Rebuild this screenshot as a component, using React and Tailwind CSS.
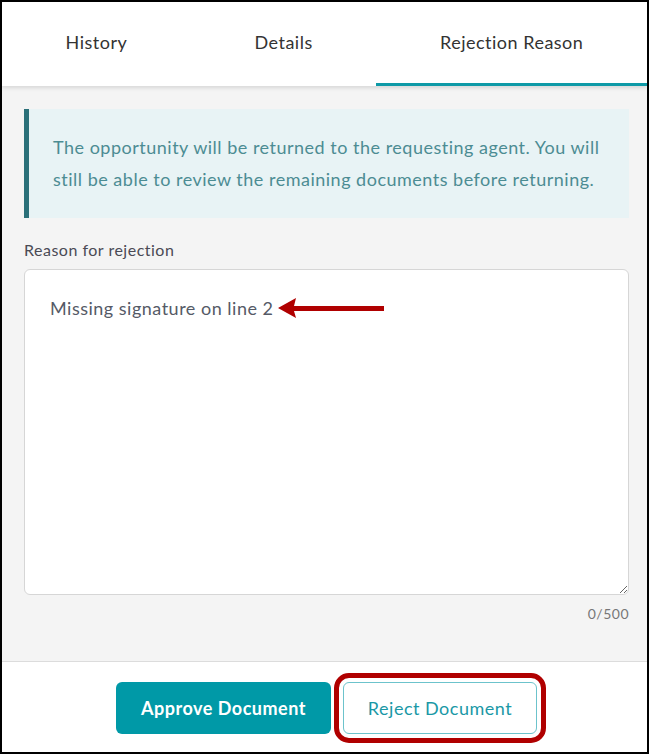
import React from 'react'

const tabs = ['History', 'Details', 'Rejection Reason']

const RejectionPanel = () => {
    const active = 2

    return (
        <div
            className="w-[649px] h-[754px] border-2 border-black bg-white flex flex-col tracking-[0.5px]"
            style={{ fontFamily: 'Lato, "Noto Sans", sans-serif' }}
        >
            <div className="relative z-10 flex h-[84px] bg-white shadow-[0_2px_4px_rgba(0,0,0,0.12)]">
                {tabs.map((tab, i) => (
                    <button
                        key={tab}
                        className={
                            i === active
                                ? 'flex-auto flex items-center justify-center text-[18px] text-[#333] border-b-[3px] border-[#0e9aa7]'
                                : 'flex-auto flex items-center justify-center text-[18px] text-[#333] border-b-[3px] border-transparent'
                        }
                    >
                        {tab}
                    </button>
                ))}
            </div>

            <div className="flex-1 bg-[#f4f4f4] pl-[22px] pr-[18px] pt-[23px] border-b border-[#dcdcdc]">
                <div className="bg-[#e8f3f5] border-l-[5px] border-[#2a7079] pl-[24px] pr-4 pt-[22px] pb-[23px] text-[18px] leading-[32px] text-[#4c8c93]">
                    The opportunity will be returned to the requesting agent. You will still be able to review the remaining documents before returning.
                </div>

                <label className="block mt-[20px] mb-[7px] text-[16px] leading-[24px] text-[#4a4a55]" htmlFor="reason">
                    Reason for rejection
                </label>
                <div className="relative">
                    <textarea
                        id="reason"
                        readOnly
                        value="Missing signature on line 2"
                        className="block w-full h-[326px] bg-white border border-[#d6d6d6] rounded-md px-[25px] pt-[25px] text-[18px] leading-[26px] text-[#555a66] outline-none tracking-[0.5px]"
                        style={{ fontFamily: 'Lato, "Noto Sans", sans-serif' }}
                    />
                    <svg className="absolute left-[254px] top-[28px]" width="108" height="22" viewBox="0 0 108 22">
                        <polygon points="0,11 18,1 16,9 106,9 106,14 16,14 18,21" fill="#b00000" />
                    </svg>
                </div>
                <p className="mt-[9px] text-right text-[14px] leading-[20px] text-[#777]">0/500</p>
            </div>

            <div className="h-[90px] bg-white flex items-center justify-center gap-[12px] pt-[2px] pl-[4px]">
                <button className="w-[215px] h-[52px] rounded-md bg-[#0099a7] text-white text-[18px] font-bold tracking-[0.5px]">
                    Approve Document
                </button>
                <button className="w-[194px] h-[52px] rounded-md bg-white border border-[#6cc3cc] text-[#1a98a6] text-[18px] tracking-[0.5px] outline-[5px] outline-solid outline-[#b00000] outline-offset-[4px]">
                    Reject Document
                </button>
            </div>
        </div>
    )
}

export default function App() {
    return <RejectionPanel />
}
